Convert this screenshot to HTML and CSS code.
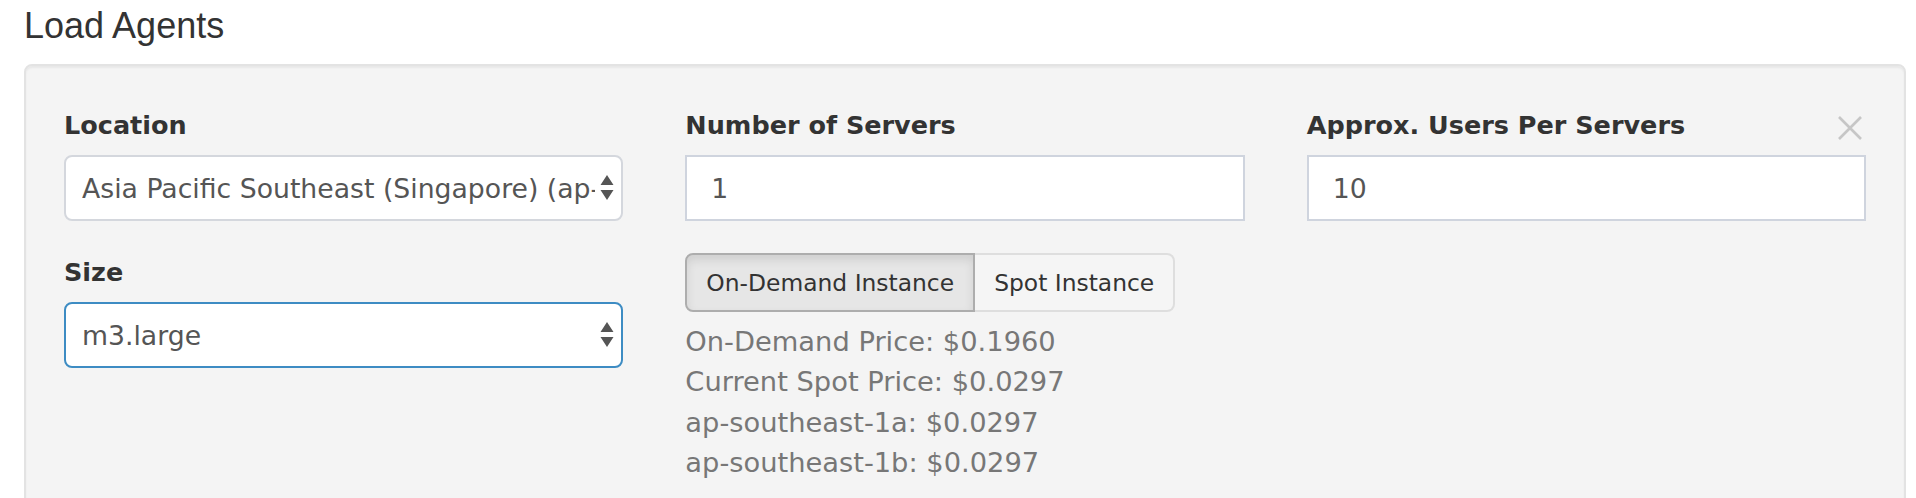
FILE: index.html
```html
<!DOCTYPE html>
<html>
<head>
<meta charset="utf-8">
<title>Load Agents</title>
<link rel="stylesheet" href="styles.css">
</head>
<body>
<div class="page">
  <h4 class="title">Load Agents</h4>
  <div class="well">
    <button class="close" type="button" aria-label="Close">
      <svg width="24" height="24" viewBox="0 0 24 24"><path d="M1 1 L23 23 M23 1 L1 23" stroke="#c6c6c6" stroke-width="2.6" fill="none"/></svg>
    </button>
    <div class="grid">
      <div class="col">
        <div class="group">
          <label class="lbl">Location</label>
          <div class="select-wrap">
            <select class="select">
              <option>Asia Pacific Southeast (Singapore) (ap-southeast-1)</option>
            </select>
            <svg class="arrows" width="14" height="26" viewBox="0 0 14 26"><path d="M7 0 L13.5 10 L0.5 10 Z M0.5 15 L13.5 15 L7 25 Z" fill="#555"/></svg>
          </div>
        </div>
        <div class="group group-gap">
          <label class="lbl">Size</label>
          <div class="select-wrap">
            <select class="select focus">
              <option>m3.large</option>
            </select>
            <svg class="arrows" width="14" height="26" viewBox="0 0 14 26"><path d="M7 0 L13.5 10 L0.5 10 Z M0.5 15 L13.5 15 L7 25 Z" fill="#555"/></svg>
          </div>
        </div>
      </div>
      <div class="col">
        <div class="group">
          <label class="lbl">Number of Servers</label>
          <input class="input" type="text" value="1">
        </div>
        <div class="btn-group">
          <button class="btn active" type="button">On-Demand Instance</button><button class="btn" type="button">Spot Instance</button>
        </div>
        <div class="prices">
          <div>On-Demand Price: $0.1960</div>
          <div>Current Spot Price: $0.0297</div>
          <div>ap-southeast-1a: $0.0297</div>
          <div>ap-southeast-1b: $0.0297</div>
        </div>
      </div>
      <div class="col">
        <div class="group">
          <label class="lbl">Approx. Users Per Servers</label>
          <input class="input" type="text" value="10">
        </div>
      </div>
    </div>
  </div>
</div>
</body>
</html>
```
FILE: styles.css
```css
html, body {
  margin: 0;
  padding: 0;
  background: #ffffff;
}
.page {
  padding: 4px 10px 0 24px;
  font-family: "DejaVu Sans", "Liberation Sans", sans-serif;
}
.title {
  margin: 0 0 16px 0;
  font-family: "Liberation Sans", Arial, sans-serif;
  font-weight: 400;
  font-size: 36px;
  line-height: 44px;
  color: #333333;
}
.well {
  position: relative;
  background: #f4f4f4;
  border: 2px solid #e3e3e3;
  border-radius: 8px;
  box-shadow: inset 0 2px 2px rgba(0, 0, 0, 0.05);
  padding: 40px 38px 60px 38px;
}
.close {
  position: absolute;
  top: 50px;
  right: 42px;
  width: 24px;
  height: 24px;
  padding: 0;
  margin: 0;
  border: 0;
  background: transparent;
  display: block;
}
.close svg {
  display: block;
}
.grid {
  display: grid;
  grid-template-columns: repeat(3, 1fr);
  column-gap: 62px;
}
.col {
  display: flex;
  flex-direction: column;
}
.group {
  display: flex;
  flex-direction: column;
}
.group-gap {
  margin-top: 32px;
}
.lbl {
  display: block;
  font-weight: 700;
  font-size: 25.5px;
  line-height: 38px;
  color: #333333;
  margin-bottom: 11px;
}
.select-wrap {
  position: relative;
}
.select {
  -webkit-appearance: none;
  appearance: none;
  display: block;
  box-sizing: border-box;
  width: 100%;
  height: 66px;
  margin: 0;
  padding: 0 26px 0 16px;
  font-family: "DejaVu Sans", sans-serif;
  font-size: 26.7px;
  color: #555555;
  background: #ffffff;
  border: 2px solid #d4d7dd;
  border-radius: 8px;
  outline: none;
}
.select.focus {
  border-color: #3d8cc3;
}
.arrows {
  position: absolute;
  right: 9px;
  top: 20px;
  pointer-events: none;
}
.input {
  display: block;
  box-sizing: border-box;
  width: 100%;
  height: 66px;
  margin: 0;
  padding: 0 24px;
  font-family: "DejaVu Sans", sans-serif;
  font-size: 26.7px;
  color: #555555;
  background: #ffffff;
  border: 2px solid #cfd4de;
  border-radius: 0;
  outline: none;
}
.btn-group {
  display: flex;
  margin-top: 32px;
  align-self: flex-start;
}
.btn {
  height: 59px;
  margin: 0;
  padding: 0 19px;
  font-family: "DejaVu Sans", sans-serif;
  font-size: 23.4px;
  color: #333333;
  background: #f5f5f5;
  border: 2px solid #dedede;
  border-left: 0;
  border-radius: 0 8px 8px 0;
}
.btn.active {
  background: #e6e6e6;
  border: 2px solid #adadad;
  border-radius: 8px 0 0 8px;
  box-shadow: inset 0 5px 10px rgba(0, 0, 0, 0.1);
}
.prices {
  margin-top: 10px;
  font-size: 27.3px;
  line-height: 40.3px;
  color: #777777;
}
```
